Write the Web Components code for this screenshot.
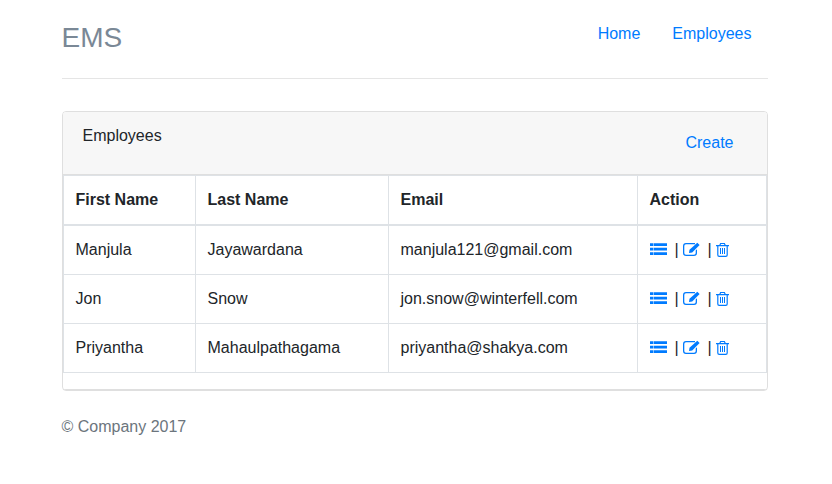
<!DOCTYPE html>
<html lang="en"><head><meta charset="utf-8"><title>EMS</title>
<style>
html,body{margin:0;background:#fff}
body{font:16px/24px "Liberation Sans",Arial,sans-serif;color:#212529}
</style></head>
<body>
<ems-app>
  <ems-header slot="header" brand="EMS">
    <ems-link>Home</ems-link>
    <ems-link>Employees</ems-link>
  </ems-header>
  <ems-card heading="Employees" action="Create">
    <ems-table></ems-table>
  </ems-card>
  <ems-footer>© Company 2017</ems-footer>
</ems-app>
<script>
const def=(name,html)=>{
  customElements.define(name,class extends HTMLElement{
    connectedCallback(){
      if(this.shadowRoot)return;
      const r=this.attachShadow({mode:'open'});
      r.innerHTML=typeof html==='function'?html(this):html;
    }
  });
};
def('ems-app',`<style>:host{display:block;width:706px;margin:0 0 0 61.5px}
.wrap{display:flex;flex-direction:column}</style><div class="wrap"><slot name="header"></slot><slot></slot></div>`);
def('ems-header',h=>`<style>:host{display:flex;justify-content:space-between;align-items:flex-start;height:78px;border-bottom:1px solid #e5e5e5;margin-bottom:32px}
.brand{font-size:28px;line-height:28px;color:#7a8896;margin-top:24px}
nav{display:flex;margin-top:22px}
</style><div class="brand">${h.getAttribute('brand')}</div><nav><slot></slot></nav>`);
def('ems-link',`<style>:host{display:block;padding:0 16px;color:#007bff;line-height:24px}</style><slot></slot>`);
def('ems-card',h=>`<style>:host{display:block;border:1px solid rgba(0,0,0,.125);border-radius:4px;overflow:hidden}
header{display:flex;justify-content:space-between;align-items:flex-start;padding:12px 20px;background:#f7f7f7;border-bottom:1px solid #dfdfdf;height:38px}
.act{color:#007bff;padding:7px 13px;line-height:24px}
</style><header><span>${h.getAttribute('heading')}</span><span class="act">${h.getAttribute('action')}</span></header><slot></slot>`);
const rows=[['Manjula','Jayawardana','manjula121@gmail.com'],['Jon','Snow','jon.snow@winterfell.com'],['Priyantha','Mahaulpathagama','priyantha@shakya.com']];
def('ems-actions',`<style>:host{display:flex;align-items:center;height:24px;color:#212529}
svg{display:block;fill:#007bff;flex:none}
span{line-height:24px}
</style>
<svg style="margin-top:-2px" width="17" height="14" viewBox="0 0 17 14"><path d="M0 1.200h3.200V4H0zM3.700 1.200H17V4H3.700zM0 5.700h3.200v2.800H0zM3.700 5.700H17v2.800H3.700zM0 10.200h3.200V13H0zM3.700 10.200H17V13H3.700z"/></svg>
<span style="margin-left:8px">|</span>
<svg style="margin-left:4.400px;margin-top:-2px" width="17" height="14" viewBox="0 0 17 14"><path fill-rule="evenodd" d="M3 1h9v1.300H3A1.700 1.700 0 0 0 1.300 4v7A1.700 1.700 0 0 0 3 12.700h8A1.700 1.700 0 0 0 12.700 11V8.500L14 7.200V11a3 3 0 0 1-3 3H3a3 3 0 0 1-3-3V4a3 3 0 0 1 3-3z"/><path d="M14.300 0.800 16.600 3.100 9.200 10.500 6 11 6.500 7.800z"/></svg>
<span style="margin-left:7.500px">|</span>
<svg style="margin-left:4.500px" width="13" height="14" viewBox="0 0 13 14"><path fill-rule="evenodd" d="M4.200 0h4.600l.9 2H13v1.200h-1.200V12a2 2 0 0 1-2 2H3.200a2 2 0 0 1-2-2V3.200H0V2h3.300zM5 1.100 4.600 2h3.800L8 1.100zM2.400 3.200V12a.8.8 0 0 0 .8.8h6.600a.8.8 0 0 0 .8-.8V3.200z"/><path d="M4 5h1v6H4zM6 5h1v6H6zM8 5h1v6H8z"/></svg>`);
def('ems-table',`<style>:host{display:block;padding-bottom:16px;border-bottom:1px solid #dfdfdf}
table{border-collapse:collapse;table-layout:fixed;width:703px;}
th,td{border:1px solid #dee2e6;padding:12px;text-align:left;vertical-align:top;line-height:24px;height:24px}
th{border-bottom-width:2px;font-weight:700;color:#212529}
</style><table><colgroup><col style="width:132px"><col style="width:193px"><col style="width:249px"><col style="width:129px"></colgroup>
<thead><tr><th>First Name</th><th>Last Name</th><th>Email</th><th>Action</th></tr></thead>
<tbody>${rows.map(r=>`<tr>${r.map(c=>`<td>${c}</td>`).join('')}<td><ems-actions></ems-actions></td></tr>`).join('')}</tbody></table>`);
def('ems-footer',`<style>:host{display:block;margin-top:24px;color:#6c757d;line-height:24px}</style><slot></slot>`);
</script>
</body></html>
